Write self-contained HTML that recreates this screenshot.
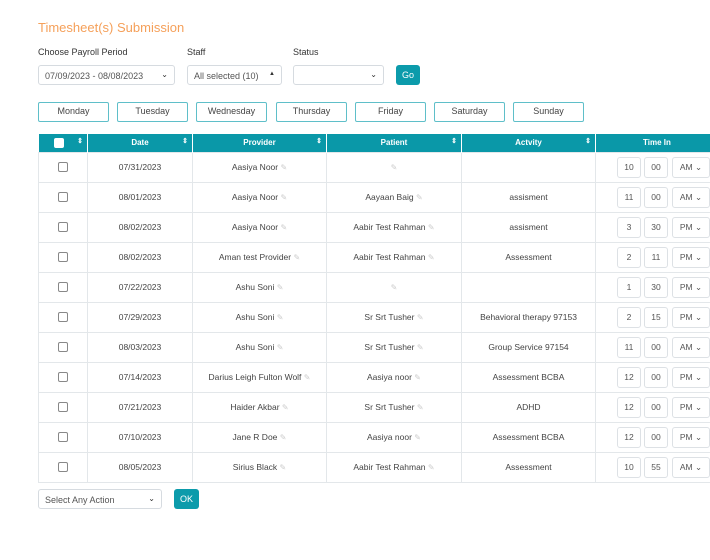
<!DOCTYPE html>
<html><head><style>
*{box-sizing:border-box;margin:0;padding:0}
body{width:710px;height:560px;background:#fff;font-family:"Liberation Sans",sans-serif;color:#444;position:relative;overflow:hidden;font-size:9px}
.a{position:absolute}
.title{left:38px;top:20px;color:#f5a05a;font-size:13px}
.lbl{top:47px;font-size:9px;color:#333}
.sel{border:1px solid #d6dbe0;border-radius:3px;height:20px;top:65px;font-size:9px;color:#555;padding:5px 6px;background:#fff}
.chev{position:absolute;right:6px;top:4px;font-size:8px;color:#333}
.btn{background:#0c9bab;color:#fff;border-radius:3px;text-align:center;font-size:9px}
.day{top:102px;height:20px;width:71px;border:1.5px solid #5fbfc9;border-radius:2px;text-align:center;line-height:17px;font-size:9px;color:#444}
table{position:absolute;left:38px;top:134px;border-collapse:collapse;table-layout:fixed;width:700px}
th{background:#0a98a8;color:#fff;height:18px;font-size:8px;font-weight:bold;border-right:1px solid #fff;position:relative}
th .s{position:absolute;right:4px;top:3px;font-size:7px}
td{height:30px;border:1px solid #e3e7ea;text-align:center;font-size:8.5px;color:#444;position:relative}
.cb{display:inline-block;width:10px;height:10px;border:1px solid #888;border-radius:2px;background:#fff;vertical-align:middle}
.ic{color:#ccc;font-size:8px}
.t{position:absolute;top:4px;height:21px;border:1px solid #dde1e5;border-radius:3px;font-size:8.5px;line-height:19px;text-align:center;color:#555}
</style></head><body>
<div class="a title">Timesheet(s) Submission</div>
<div class="a lbl" style="left:38px">Choose Payroll Period</div>
<div class="a lbl" style="left:187px">Staff</div>
<div class="a lbl" style="left:293px">Status</div>
<div class="a sel" style="left:38px;width:137px">07/09/2023 - 08/08/2023<span class="chev">&#8964;</span></div>
<div class="a sel" style="left:187px;width:95px">All selected (10)<span class="chev" style="top:5px;font-size:6px">&#9650;</span></div>
<div class="a sel" style="left:293px;width:91px"><span class="chev">&#8964;</span></div>
<div class="a btn" style="left:396px;top:65px;width:24px;height:20px;line-height:20px">Go</div>
<div class="a day" style="left:38px">Monday</div>
<div class="a day" style="left:117px">Tuesday</div>
<div class="a day" style="left:196px">Wednesday</div>
<div class="a day" style="left:276px">Thursday</div>
<div class="a day" style="left:355px">Friday</div>
<div class="a day" style="left:434px">Saturday</div>
<div class="a day" style="left:513px">Sunday</div>
<table>
<colgroup><col style="width:49px"><col style="width:105px"><col style="width:134px"><col style="width:135px"><col style="width:134px"><col style="width:143px"></colgroup>
<tr><th style="text-align:left;padding-left:15px"><span class="cb" style="border-color:#fff"></span><span class="s">&#8661;</span></th><th>Date<span class="s">&#8661;</span></th><th>Provider<span class="s">&#8661;</span></th><th>Patient<span class="s">&#8661;</span></th><th>Actvity<span class="s">&#8661;</span></th><th style="text-align:left;padding-left:47px">Time In</th></tr>
<!--rows-->
<tr><td><span class="cb"></span></td><td>07/31/2023</td><td>Aasiya Noor <span class="ic">&#9998;</span></td><td><span class="ic">&#9998;</span></td><td></td><td><div class="t" style="left:21px;width:24px">10</div><div class="t" style="left:48px;width:24px">00</div><div class="t" style="left:76px;width:38px">AM &#8964;</div></td></tr>
<tr><td><span class="cb"></span></td><td>08/01/2023</td><td>Aasiya Noor <span class="ic">&#9998;</span></td><td>Aayaan Baig <span class="ic">&#9998;</span></td><td>assisment</td><td><div class="t" style="left:21px;width:24px">11</div><div class="t" style="left:48px;width:24px">00</div><div class="t" style="left:76px;width:38px">AM &#8964;</div></td></tr>
<tr><td><span class="cb"></span></td><td>08/02/2023</td><td>Aasiya Noor <span class="ic">&#9998;</span></td><td>Aabir Test Rahman <span class="ic">&#9998;</span></td><td>assisment</td><td><div class="t" style="left:21px;width:24px">3</div><div class="t" style="left:48px;width:24px">30</div><div class="t" style="left:76px;width:38px">PM &#8964;</div></td></tr>
<tr><td><span class="cb"></span></td><td>08/02/2023</td><td>Aman test Provider <span class="ic">&#9998;</span></td><td>Aabir Test Rahman <span class="ic">&#9998;</span></td><td>Assessment</td><td><div class="t" style="left:21px;width:24px">2</div><div class="t" style="left:48px;width:24px">11</div><div class="t" style="left:76px;width:38px">PM &#8964;</div></td></tr>
<tr><td><span class="cb"></span></td><td>07/22/2023</td><td>Ashu Soni <span class="ic">&#9998;</span></td><td><span class="ic">&#9998;</span></td><td></td><td><div class="t" style="left:21px;width:24px">1</div><div class="t" style="left:48px;width:24px">30</div><div class="t" style="left:76px;width:38px">PM &#8964;</div></td></tr>
<tr><td><span class="cb"></span></td><td>07/29/2023</td><td>Ashu Soni <span class="ic">&#9998;</span></td><td>Sr Srt Tusher <span class="ic">&#9998;</span></td><td>Behavioral therapy 97153</td><td><div class="t" style="left:21px;width:24px">2</div><div class="t" style="left:48px;width:24px">15</div><div class="t" style="left:76px;width:38px">PM &#8964;</div></td></tr>
<tr><td><span class="cb"></span></td><td>08/03/2023</td><td>Ashu Soni <span class="ic">&#9998;</span></td><td>Sr Srt Tusher <span class="ic">&#9998;</span></td><td>Group Service 97154</td><td><div class="t" style="left:21px;width:24px">11</div><div class="t" style="left:48px;width:24px">00</div><div class="t" style="left:76px;width:38px">AM &#8964;</div></td></tr>
<tr><td><span class="cb"></span></td><td>07/14/2023</td><td>Darius Leigh Fulton Wolf <span class="ic">&#9998;</span></td><td>Aasiya noor <span class="ic">&#9998;</span></td><td>Assessment BCBA</td><td><div class="t" style="left:21px;width:24px">12</div><div class="t" style="left:48px;width:24px">00</div><div class="t" style="left:76px;width:38px">PM &#8964;</div></td></tr>
<tr><td><span class="cb"></span></td><td>07/21/2023</td><td>Haider Akbar <span class="ic">&#9998;</span></td><td>Sr Srt Tusher <span class="ic">&#9998;</span></td><td>ADHD</td><td><div class="t" style="left:21px;width:24px">12</div><div class="t" style="left:48px;width:24px">00</div><div class="t" style="left:76px;width:38px">PM &#8964;</div></td></tr>
<tr><td><span class="cb"></span></td><td>07/10/2023</td><td>Jane R Doe <span class="ic">&#9998;</span></td><td>Aasiya noor <span class="ic">&#9998;</span></td><td>Assessment BCBA</td><td><div class="t" style="left:21px;width:24px">12</div><div class="t" style="left:48px;width:24px">00</div><div class="t" style="left:76px;width:38px">PM &#8964;</div></td></tr>
<tr><td><span class="cb"></span></td><td>08/05/2023</td><td>Sirius Black <span class="ic">&#9998;</span></td><td>Aabir Test Rahman <span class="ic">&#9998;</span></td><td>Assessment</td><td><div class="t" style="left:21px;width:24px">10</div><div class="t" style="left:48px;width:24px">55</div><div class="t" style="left:76px;width:38px">AM &#8964;</div></td></tr>
</table>
<div class="a sel" style="left:38px;top:489px;width:124px">Select Any Action<span class="chev">&#8964;</span></div>
<div class="a btn" style="left:174px;top:489px;width:25px;height:20px;line-height:20px">OK</div>
</body></html>
